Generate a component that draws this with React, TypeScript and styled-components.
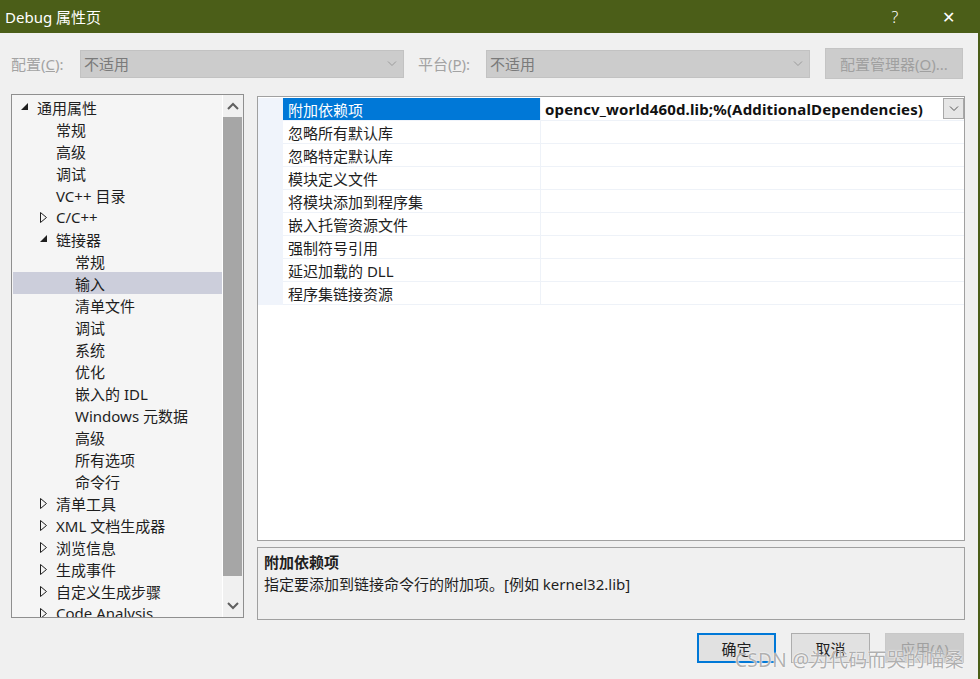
import styled, { createGlobalStyle } from 'styled-components';

const GlobalStyle = createGlobalStyle`
  html, body {
    margin: 0;
    padding: 0;
    background: #f0f0f0;
  }
  body {
    font-family: "Noto Sans", "Noto Sans CJK SC", sans-serif;
    color: #1e1e1e;
  }
`;

const FONT = `"Noto Sans", "Noto Sans CJK SC", sans-serif`;

const Window = styled.div`
  width: 980px;
  height: 679px;
  box-sizing: border-box;
  background: #f0f0f0;
  border-right: 2px solid #4b5e18;
  display: flex;
  flex-direction: column;
  position: relative;
  overflow: hidden;
`;

const TitleBar = styled.div`
  height: 33px;
  background: #4b5e18;
  color: #fff;
  display: flex;
  align-items: center;
  padding-left: 5px;
  font-size: 15px;
`;

const Title = styled.div`
  flex: 1;
`;

const CaptionButton = styled.div<{ width: number }>`
  width: ${({ width }) => width}px;
  height: 33px;
  display: flex;
  align-items: center;
  justify-content: center;
  font-size: 16px;
  font-weight: 300;
`;

const Toolbar = styled.div`
  display: flex;
  align-items: center;
  margin-top: 15px;
  padding-left: 11px;
  height: 31px;
`;

const Label = styled.div<{ width: number; gap?: number }>`
  width: ${({ width }) => width}px;
  margin-left: ${({ gap }) => gap ?? 0}px;
  color: #a3a3a3;
  font-size: 15px;
  u {
    text-decoration: underline;
  }
`;

const Combo = styled.div`
  width: 324px;
  height: 28px;
  box-sizing: border-box;
  background: #cccccc;
  border: 1px solid #c2c2c2;
  display: flex;
  align-items: center;
  padding: 0 6px 0 3px;
  color: #7a7a7a;
  font-size: 15px;
`;

const ComboText = styled.div`
  flex: 1;
`;

const ToolButton = styled.div`
  margin-left: 15px;
  width: 138px;
  height: 31px;
  box-sizing: border-box;
  background: #cccccc;
  border: 1px solid #c4c4c4;
  color: #a0a0a0;
  font-size: 15px;
  display: flex;
  align-items: center;
  justify-content: center;
`;

const Main = styled.div`
  display: flex;
  margin-top: 15px;
  padding-left: 11px;
  gap: 13px;
`;

const TreePanel = styled.div`
  width: 233px;
  height: 524px;
  box-sizing: border-box;
  border: 1px solid #8f8f8f;
  background: #f5f5f5;
  display: flex;
  overflow: hidden;
`;

const TreeList = styled.div`
  flex: 1;
  padding: 1px 0 0 1px;
  overflow: hidden;
`;

const TreeRow = styled.div<{ level: number; selected?: boolean }>`
  height: 22px;
  display: flex;
  align-items: center;
  padding-left: ${({ level }) => 8 + level * 19}px;
  background: ${({ selected }) => (selected ? '#cccedb' : 'transparent')};
  font-size: 15px;
  white-space: nowrap;
  color: #1e1e1e;
`;

const Expander = styled.div`
  width: 16px;
  height: 22px;
  display: flex;
  align-items: center;
`;

const ScrollBar = styled.div`
  width: 20px;
  background: #f0f0f0;
  display: flex;
  flex-direction: column;
  border-left: 1px solid #ffffff;
`;

const ScrollArrow = styled.div`
  height: 22px;
  display: flex;
  align-items: center;
  justify-content: center;
`;

const ScrollTrack = styled.div`
  flex: 1;
  display: flex;
  flex-direction: column;
`;

const ScrollThumb = styled.div`
  height: 459px;
  margin: 0 1px 0 0;
  background: #a6a6a6;
`;

const RightColumn = styled.div`
  width: 708px;
  margin-top: 2px;
  display: flex;
  flex-direction: column;
  gap: 6px;
`;

const GridPanel = styled.div`
  height: 445px;
  box-sizing: border-box;
  border: 1px solid #a0a0a0;
  background: #fff;
  padding-top: 1px;
`;

const GridRow = styled.div`
  display: flex;
  height: 23px;
`;

const Gutter = styled.div`
  width: 25px;
  background: #f0f4fb;
`;

const NameCell = styled.div<{ selected?: boolean }>`
  width: 258px;
  box-sizing: border-box;
  padding-left: 5px;
  display: flex;
  align-items: center;
  height: 23px;
  font-size: 15px;
  background: ${({ selected }) => (selected ? '#0078d7' : '#fff')};
  color: ${({ selected }) => (selected ? '#fff' : '#1e1e1e')};
  border-bottom: 1px solid ${({ selected }) => (selected ? '#f0f4fb' : '#eef2f8')};
  border-right: 1px solid #eef2f8;
`;

const ValueCell = styled.div`
  flex: 1;
  display: flex;
  align-items: center;
  box-sizing: border-box;
  padding-left: 4px;
  height: 23px;
  border-bottom: 1px solid #eef2f8;
`;

const ValueText = styled.div`
  flex: 1;
  font-family: ${FONT};
  font-weight: 700;
  font-size: 15px;
  letter-spacing: 0.15px;
  white-space: nowrap;
  color: #111;
`;

const DropButton = styled.div`
  width: 21px;
  height: 21px;
  box-sizing: border-box;
  border: 1px solid #a8a8a8;
  background: #e6e6e6;
  display: flex;
  align-items: center;
  justify-content: center;
  margin-top: -1px;
`;

const DescPanel = styled.div`
  height: 73px;
  box-sizing: border-box;
  border: 1px solid #a0a0a0;
  padding: 3px 6px;
  font-size: 15px;
`;

const DescTitle = styled.div`
  font-weight: 700;
  height: 22px;
  line-height: 22px;
`;

const DescText = styled.div`
  height: 22px;
  line-height: 22px;
`;

const Footer = styled.div`
  display: flex;
  justify-content: flex-end;
  gap: 15px;
  padding-right: 14px;
  margin-top: 13px;
`;

const DialogButton = styled.div<{ kind?: 'default' | 'disabled' }>`
  width: 79px;
  height: 30px;
  box-sizing: border-box;
  display: flex;
  align-items: center;
  justify-content: center;
  font-size: 15px;
  background: ${({ kind }) => (kind === 'disabled' ? '#cccccc' : '#e1e1e1')};
  color: ${({ kind }) => (kind === 'disabled' ? '#a0a0a0' : '#1e1e1e')};
  border: ${({ kind }) =>
    kind === 'default' ? '2px solid #0078d7' : kind === 'disabled' ? '1px solid #c8c8c8' : '1px solid #adadad'};
`;

// CSDN watermark laid over the button row
const Watermark = styled.div`
  position: absolute;
  right: 14px;
  bottom: 6px;
  font-size: 19px;
  color: rgba(150, 150, 150, 0.75);
  text-shadow: 0 0 1px #fff, 0 0 2px #fff;
  font-family: ${FONT};
  letter-spacing: 0.3px;
`;

const Chevron = ({ up, color = '#777' }: { up?: boolean; color?: string }) => (
  <svg width="10" height="6" viewBox="0 0 10 6">
    <path
      d={up ? 'M1 5.5 L5 1.5 L9 5.5' : 'M1 0.5 L5 4.5 L9 0.5'}
      fill="none"
      stroke={color}
      strokeWidth="1"
    />
  </svg>
);

const ScrollChevron = ({ up }: { up?: boolean }) => (
  <svg width="12" height="8" viewBox="0 0 12 8">
    <path
      d={up ? 'M1 7 L6 2 L11 7' : 'M1 1 L6 6 L11 1'}
      fill="none"
      stroke="#606060"
      strokeWidth="2"
    />
  </svg>
);

const ExpandedIcon = () => (
  <svg width="8" height="8" viewBox="0 0 8 8">
    <path d="M7 0 L7 7 L0 7 Z" fill="#1e1e1e" />
  </svg>
);

const CollapsedIcon = () => (
  <svg width="8" height="11" viewBox="0 0 8 11">
    <path d="M0.5 0.5 L6.5 5.5 L0.5 10.5 Z" fill="none" stroke="#1e1e1e" strokeWidth="1" />
  </svg>
);

type Node = { label: string; level: number; state?: 'open' | 'closed'; selected?: boolean };

const tree: Node[] = [
  { label: '通用属性', level: 0, state: 'open' },
  { label: '常规', level: 1 },
  { label: '高级', level: 1 },
  { label: '调试', level: 1 },
  { label: 'VC++ 目录', level: 1 },
  { label: 'C/C++', level: 1, state: 'closed' },
  { label: '链接器', level: 1, state: 'open' },
  { label: '常规', level: 2 },
  { label: '输入', level: 2, selected: true },
  { label: '清单文件', level: 2 },
  { label: '调试', level: 2 },
  { label: '系统', level: 2 },
  { label: '优化', level: 2 },
  { label: '嵌入的 IDL', level: 2 },
  { label: 'Windows 元数据', level: 2 },
  { label: '高级', level: 2 },
  { label: '所有选项', level: 2 },
  { label: '命令行', level: 2 },
  { label: '清单工具', level: 1, state: 'closed' },
  { label: 'XML 文档生成器', level: 1, state: 'closed' },
  { label: '浏览信息', level: 1, state: 'closed' },
  { label: '生成事件', level: 1, state: 'closed' },
  { label: '自定义生成步骤', level: 1, state: 'closed' },
  { label: 'Code Analysis', level: 1, state: 'closed' },
];

const props = [
  '附加依赖项',
  '忽略所有默认库',
  '忽略特定默认库',
  '模块定义文件',
  '将模块添加到程序集',
  '嵌入托管资源文件',
  '强制符号引用',
  '延迟加载的 DLL',
  '程序集链接资源',
];

const App = () => {
  return (
    <>
      <GlobalStyle />
      <Window>
        <TitleBar>
          <Title>Debug 属性页</Title>
          <CaptionButton width={46}>?</CaptionButton>
          <CaptionButton width={60}>✕</CaptionButton>
        </TitleBar>

        <Toolbar>
          <Label width={69}>
            配置(<u>C</u>):
          </Label>
          <Combo>
            <ComboText>不适用</ComboText>
            <Chevron color="#9a9a9a" />
          </Combo>
          <Label width={68} gap={14}>
            平台(<u>P</u>):
          </Label>
          <Combo>
            <ComboText>不适用</ComboText>
            <Chevron color="#9a9a9a" />
          </Combo>
          <ToolButton>
            配置管理器(<u>O</u>)...
          </ToolButton>
        </Toolbar>

        <Main>
          <TreePanel>
            <TreeList>
              {tree.map((node, i) => (
                <TreeRow key={i} level={node.level} selected={node.selected}>
                  <Expander>
                    {node.state === 'open' && <ExpandedIcon />}
                    {node.state === 'closed' && <CollapsedIcon />}
                  </Expander>
                  {node.label}
                </TreeRow>
              ))}
            </TreeList>
            <ScrollBar>
              <ScrollArrow>
                <ScrollChevron up />
              </ScrollArrow>
              <ScrollTrack>
                <ScrollThumb />
              </ScrollTrack>
              <ScrollArrow>
                <ScrollChevron />
              </ScrollArrow>
            </ScrollBar>
          </TreePanel>

          <RightColumn>
            <GridPanel>
              {props.map((name, i) => (
                <GridRow key={name}>
                  <Gutter />
                  <NameCell selected={i === 0}>{name}</NameCell>
                  <ValueCell>
                    {i === 0 && (
                      <>
                        <ValueText>opencv_world460d.lib;%(AdditionalDependencies)</ValueText>
                        <DropButton>
                          <Chevron color="#555" />
                        </DropButton>
                      </>
                    )}
                  </ValueCell>
                </GridRow>
              ))}
            </GridPanel>
            <DescPanel>
              <DescTitle>附加依赖项</DescTitle>
              <DescText>指定要添加到链接命令行的附加项。[例如 kernel32.lib]</DescText>
            </DescPanel>
          </RightColumn>
        </Main>

        <Footer>
          <DialogButton kind="default">确定</DialogButton>
          <DialogButton>取消</DialogButton>
          <DialogButton kind="disabled">应用(A)</DialogButton>
        </Footer>

        <Watermark>CSDN @为代码而哭的喵桑</Watermark>
      </Window>
    </>
  );
};

export default App;
